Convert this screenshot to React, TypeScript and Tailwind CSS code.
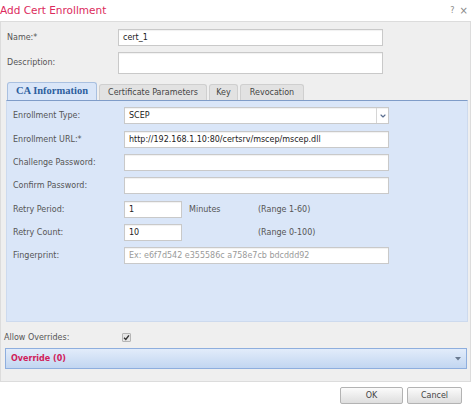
import { ChevronDown } from 'lucide-react';

const labelCls = 'text-[8px] text-[#555] leading-none';
const boxCls =
  'h-[17px] bg-white border border-[#c9c9c9] shadow-[inset_0_1px_1px_rgba(0,0,0,0.06)] px-[4px] flex items-center text-[8px] leading-none';
const inputCls = `${boxCls} text-[#222]`;

function Row({ label, children, top = 0 }: { label: string; children: React.ReactNode; top?: number }) {
  return (
    <div className="flex items-center" style={{ marginTop: top }}>
      <div className={`w-[117px] pl-[6px] ${labelCls}`}>{label}</div>
      {children}
    </div>
  );
}

export default function App() {
  return (
    <div
      className="w-[474px] h-[406px] bg-white flex flex-col overflow-hidden"
      style={{ fontFamily: '"DejaVu Sans", Verdana, sans-serif' }}
    >
      {/* title bar */}
      <div className="h-[21px] flex items-center justify-between pr-[6px]">
        <span className="text-[10.5px] text-[#dc2a5c] leading-none">Add Cert Enrollment</span>
        <div className="flex items-center gap-[5px] text-[8px] text-[#888] leading-none">
          <span>?</span>
          <span className="text-[10px]">×</span>
        </div>
      </div>

      {/* body */}
      <div className="w-[471px] h-[361px] bg-[#efefef] border border-[#dcdcdc] flex flex-col">
        <div className="flex items-center mt-[7px]">
          <div className={`w-[117px] pl-[6px] ${labelCls}`}>Name:*</div>
          <div className={`${inputCls} w-[265px]`}>cert_1</div>
        </div>
        <div className="flex items-start mt-[6px]">
          <div className={`w-[117px] pl-[6px] pt-[7px] ${labelCls}`}>Description:</div>
          <div className={`${inputCls} w-[265px] h-[22px]`} />
        </div>

        {/* tabs */}
        <div className="flex items-end gap-[2px] ml-[6px] mt-[8px] h-[18px]">
          <div className="h-[18px] w-[90px] bg-[#dae6f8] border border-[#a9c0e0] border-b-0 rounded-t-[3px] flex items-center justify-center text-[10.5px] font-bold text-[#2e5f9e] leading-none"
            style={{ fontFamily: '"Liberation Serif", "DejaVu Serif", serif' }}>
            CA Information
          </div>
          <div className="h-[16px] w-[108px] bg-[#e2e2e2] border border-[#cfcfcf] border-b-0 rounded-t-[3px] flex items-center justify-center text-[8px] text-[#444] leading-none">
            Certificate Parameters
          </div>
          <div className="h-[16px] w-[29px] bg-[#e2e2e2] border border-[#cfcfcf] border-b-0 rounded-t-[3px] flex items-center justify-center text-[8px] text-[#444] leading-none">
            Key
          </div>
          <div className="h-[16px] w-[64px] bg-[#e2e2e2] border border-[#cfcfcf] border-b-0 rounded-t-[3px] flex items-center justify-center text-[8px] text-[#444] leading-none">
            Revocation
          </div>
        </div>

        {/* tab panel */}
        <div className="ml-[5px] w-[462px] h-[222px] bg-[#dae6f8] border border-[#cddaee] border-t-[#7f9cc8] pt-[6px] flex flex-col">
          <Row label="Enrollment Type:">
            <div className={`${inputCls} w-[265px] pr-0 justify-between`}>
              <span>SCEP</span>
              <div className="h-full w-[12px] border-l border-[#d6d6d6] flex items-center justify-center">
                <ChevronDown size={8} strokeWidth={3.5} className="text-[#5a6e90]" />
              </div>
            </div>
          </Row>
          <Row label="Enrollment URL:*" top={7}>
            <div className={`${inputCls} w-[265px]`}>http://192.168.1.10:80/certsrv/mscep/mscep.dll</div>
          </Row>
          <Row label="Challenge Password:" top={6}>
            <div className={`${inputCls} w-[265px]`} />
          </Row>
          <Row label="Confirm Password:" top={6}>
            <div className={`${inputCls} w-[265px]`} />
          </Row>
          <Row label="Retry Period:" top={7}>
            <div className={`${inputCls} w-[58px]`}>1</div>
            <div className="w-[76px] pl-[7px] text-[8px] text-[#555] leading-none">Minutes</div>
            <div className="text-[8px] text-[#555] leading-none">(Range 1-60)</div>
          </Row>
          <Row label="Retry Count:" top={6}>
            <div className={`${inputCls} w-[58px]`}>10</div>
            <div className="w-[76px]" />
            <div className="text-[8px] text-[#555] leading-none">(Range 0-100)</div>
          </Row>
          <Row label="Fingerprint:" top={6}>
            <div className={`${boxCls} text-[#9a9a9a] w-[265px]`}>Ex: e6f7d542 e355586c a758e7cb bdcddd92</div>
          </Row>
        </div>

        {/* allow overrides */}
        <div className="flex items-center mt-[11px]">
          <div className="w-[121px] pl-[3px] text-[8px] text-[#555] leading-none">Allow Overrides:</div>
          <div className="w-[9px] h-[9px] bg-[#e6e6e6] border border-[#b5b5b5] rounded-[1px] flex items-center justify-center">
            <svg width="7" height="7" viewBox="0 0 8 8">
              <path d="M1.2 4.2 L3.2 6.2 L6.8 1.5" fill="none" stroke="#333" strokeWidth="1.6" />
            </svg>
          </div>
        </div>

        {/* override bar */}
        <div className="ml-[4px] mt-[6px] w-[462px] h-[21px] border border-[#8eaede] bg-gradient-to-b from-[#e2ecfa] to-[#c2d6f1] flex items-center justify-between px-[5px]">
          <span className="text-[8px] font-bold text-[#d0215a] leading-none">Override (0)</span>
          <svg width="6" height="4" viewBox="0 0 6 4">
            <path d="M0 0 L6 0 L3 3.5 Z" fill="#6a7a90" />
          </svg>
        </div>
      </div>

      {/* footer */}
      <div className="flex justify-end gap-[4px] pr-[12px] mt-[5px]">
        <button className="w-[63px] h-[17px] border border-[#b3b3b3] rounded-[2px] bg-gradient-to-b from-[#fbfbfb] to-[#dedede] text-[8px] text-[#444] leading-none">
          OK
        </button>
        <button className="w-[55px] h-[17px] border border-[#b3b3b3] rounded-[2px] bg-gradient-to-b from-[#fbfbfb] to-[#dedede] text-[8px] text-[#444] leading-none">
          Cancel
        </button>
      </div>
    </div>
  );
}
